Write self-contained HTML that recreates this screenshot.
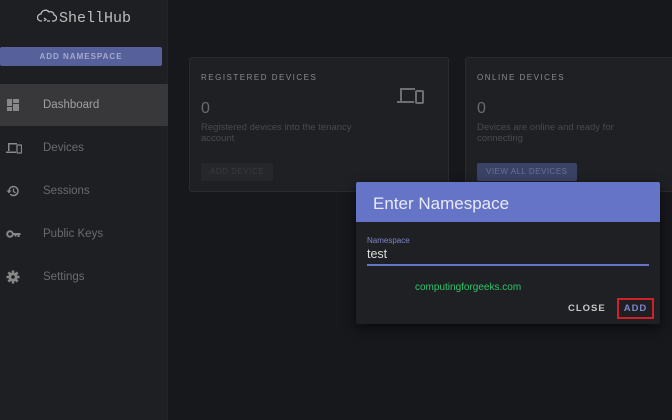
<!DOCTYPE html>
<html><head><style>
*{box-sizing:border-box;margin:0;padding:0}
body{width:672px;height:420px;overflow:hidden;background:#17181c;font-family:"Liberation Sans",sans-serif;position:relative}
.sb{position:absolute;left:0;top:0;width:168px;height:420px;background:#1e1f23;border-right:1px solid #232428}
.logo{position:absolute;left:37px;top:8px;color:#bdbdbd;font-family:"Liberation Mono",monospace;font-size:15px}
.btn{position:absolute;left:0;top:47px;width:162px;height:19px;background:#56609a;border-radius:2px;color:#a4aad0;font-size:8px;letter-spacing:1px;text-align:center;line-height:19px;font-weight:bold}
.item{position:absolute;left:0;width:168px;height:42px;color:#6b6b6e;font-size:11.5px;line-height:42px;padding-left:43px}
.item.act{background:#38383b;color:#a0a0a3}
.ic{position:absolute;left:6px;top:14px}
.card{position:absolute;top:57px;height:135px;background:#1f2024;border:1px solid #2a2b2f;border-radius:3px}
.t{position:absolute;left:11px;top:15px;font-size:8px;letter-spacing:1.5px;color:#8a8a8e}
.n{position:absolute;left:11px;top:42px;font-size:16px;color:#6a6a6e}
.d{position:absolute;left:11px;top:64px;font-size:9.5px;color:#4a4a4e;line-height:11px;width:180px}
.cb{position:absolute;left:11px;top:105px;height:18px;border-radius:2px;font-size:8px;letter-spacing:.5px;line-height:18px;padding:0 9px}
.dlg{position:absolute;left:356px;top:182px;width:304px;height:142px;background:#1f2024;box-shadow:0 4px 12px rgba(0,0,0,.6);border-radius:2px}
.dh{height:40px;background:#6674c8;color:#e8eaf6;font-size:17px;padding:12px 0 0 17px;border-radius:2px 2px 0 0}
</style></head><body>
<div class="sb">
<div class="logo"><svg width="20" height="16" viewBox="0 0 20 16" style="vertical-align:-2px;margin-right:2px"><path d="M5 13H4a3.5 3.5 0 0 1 0-7 4.5 4.5 0 0 1 8-2 3.5 3.5 0 0 1 5 3 3 3 0 0 1-1 6h-1" fill="none" stroke="#bdbdbd" stroke-width="1.3"/><path d="M7 10l2 1.5L7 13M10 13h3" fill="none" stroke="#bdbdbd" stroke-width="1.2"/></svg>ShellHub</div>
<div class="btn">ADD NAMESPACE</div>
<div class="item act" style="top:84px">Dashboard<svg class="ic" width="14" height="14" viewBox="0 0 14 14"><rect x="1" y="1" width="5" height="7" fill="#888"/><rect x="1" y="9" width="5" height="4" fill="#888"/><rect x="7" y="1" width="6" height="4" fill="#888"/><rect x="7" y="6" width="6" height="7" fill="#888"/></svg></div>
<div class="item" style="top:127px">Devices<svg class="ic" width="16" height="14" viewBox="0 0 16 14"><path d="M2 2h9v1.5H3.5V10H2z M0 10.5h10V12H0z" fill="#888"/><rect x="11" y="4" width="4.5" height="8" rx=".5" fill="none" stroke="#888" stroke-width="1.3"/></svg></div>
<div class="item" style="top:170px">Sessions<svg class="ic" width="14" height="14" viewBox="0 0 14 14"><path d="M3 7a4.5 4.5 0 1 1 1.3 3.2" fill="none" stroke="#888" stroke-width="1.5"/><path d="M0.5 6.5h5l-2.5 3z" fill="#888"/><path d="M7.5 4.5v3l2 1.5" fill="none" stroke="#888" stroke-width="1.2"/></svg></div>
<div class="item" style="top:213px">Public Keys<svg class="ic" width="16" height="14" viewBox="0 0 16 14"><circle cx="4" cy="7" r="2.8" fill="none" stroke="#888" stroke-width="2"/><path d="M6.5 6h8v2h-1v2h-2V8h-1v1.5h-2V8h-2z" fill="#888"/></svg></div>
<div class="item" style="top:256px">Settings<svg class="ic" width="14" height="14" viewBox="0 0 14 14"><circle cx="7" cy="7" r="4.5" fill="#888"/><g stroke="#888" stroke-width="2.6"><path d="M7 0.5v13M0.5 7h13M2.4 2.4l9.2 9.2M11.6 2.4l-9.2 9.2"/></g><circle cx="7" cy="7" r="1.8" fill="#1e1f23"/></svg></div>
</div>
<div class="card" style="left:189px;width:260px">
<div class="t">REGISTERED DEVICES</div>
<svg style="position:absolute;left:207px;top:28px" width="28" height="20" viewBox="0 0 28 20"><path d="M3 2h15v2H5v11H3z M0 15h17v2H0z" fill="#6f6f72"/><rect x="19" y="5" width="7" height="12" rx="1" fill="none" stroke="#6f6f72" stroke-width="2"/></svg>
<div class="n">0</div>
<div class="d">Registered devices into the tenancy account</div>
<div class="cb" style="background:#26272a;color:#3a3a3d">ADD DEVICE</div>
</div>
<div class="card" style="left:465px;width:220px">
<div class="t">ONLINE DEVICES</div>
<div class="n">0</div>
<div class="d" style="width:160px">Devices are online and ready for connecting</div>
<div class="cb" style="background:#3a4266;color:#6a7099">VIEW ALL DEVICES</div>
</div>
<div class="dlg">
<div class="dh">Enter Namespace</div>
<div style="position:absolute;left:11px;top:54px;font-size:8px;color:#7d86c8">Namespace</div>
<div style="position:absolute;left:11px;top:65px;font-size:12.5px;color:#dcdcdc">test</div>
<div style="position:absolute;left:11px;top:82px;width:282px;height:2px;background:#6674c8"></div>
<div style="position:absolute;left:59px;top:100px;font-size:10px;color:#2fc46a">computingforgeeks.com</div>
<div style="position:absolute;left:212px;top:121px;font-size:9.5px;font-weight:bold;letter-spacing:1px;color:#c8c8c8">CLOSE</div>
<div style="position:absolute;left:261px;top:116px;width:37px;height:21px;border:2px solid #d0202a;font-size:9.5px;font-weight:bold;letter-spacing:1px;color:#7d86c8;text-align:center;line-height:17px">ADD</div>
</div>
</body></html>
